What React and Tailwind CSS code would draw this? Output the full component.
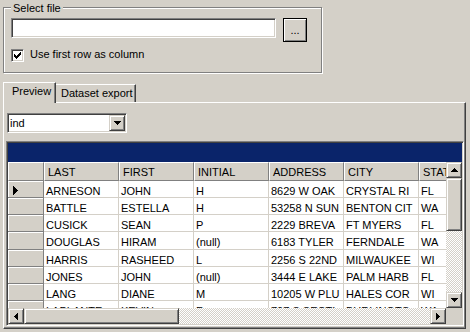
import React from "react";

const raised =
  "border border-t-[#d4d0c8] border-l-[#d4d0c8] border-b-[#404040] border-r-[#404040] shadow-[inset_1px_1px_0_#fff,inset_-1px_-1px_0_#808080]";
const sunken =
  "border border-t-[#808080] border-l-[#808080] border-b-white border-r-white shadow-[inset_1px_1px_0_#404040,inset_-1px_-1px_0_#d4d0c8]";
const checker =
  "bg-[image:repeating-conic-gradient(#ffffff_0_25%,#d4d0c8_0_50%)] bg-[length:2px_2px]";

const columns = ["LAST", "FIRST", "INITIAL", "ADDRESS", "CITY", "STATE"];

const rows = [
  ["ARNESON", "JOHN", "H", "8629 W OAK", "CRYSTAL RI", "FL"],
  ["BATTLE", "ESTELLA", "H", "53258 N SUN", "BENTON CIT", "WA"],
  ["CUSICK", "SEAN", "P", "2229 BREVA", "FT MYERS", "FL"],
  ["DOUGLAS", "HIRAM", "(null)", "6183 TYLER", "FERNDALE", "WA"],
  ["HARRIS", "RASHEED", "L", "2256 S 22ND", "MILWAUKEE", "WI"],
  ["JONES", "JOHN", "(null)", "3444 E LAKE", "PALM HARB", "FL"],
  ["LANG", "DIANE", "M", "10205 W PLU", "HALES COR", "WI"],
  ["LAPLANTE", "KEVIN", "F", "707 S SECTI", "BURLINGTO", "WA"],
];

// pixel triangle, n = number of steps (7,5,3,1 for n=4)
function Tri({ dir, n = 4 }) {
  const long = n * 2 - 1;
  const horiz = dir === "left" || dir === "right";
  const w = horiz ? n : long;
  const h = horiz ? long : n;
  const rects = [];
  for (let i = 0; i < n; i++) {
    const len = long - i * 2;
    if (dir === "down") rects.push([i, i, len, 1]);
    if (dir === "up") rects.push([i, n - 1 - i, len, 1]);
    if (dir === "right") rects.push([i, i, 1, len]);
    if (dir === "left") rects.push([n - 1 - i, i, 1, len]);
  }
  return (
    <svg width={w} height={h} viewBox={`0 0 ${w} ${h}`} shapeRendering="crispEdges">
      {rects.map(([x, y, rw, rh], k) => (
        <rect key={k} x={x} y={y} width={rw} height={rh} fill="#000" />
      ))}
    </svg>
  );
}

function ScrollBtn({ dir, className = "" }) {
  return (
    <div className={`${raised} bg-[#d4d0c8] flex items-center justify-center shrink-0 ${className}`}>
      <Tri dir={dir} />
    </div>
  );
}

export default function App() {
  return (
    <div className="w-[470px] h-[332px] overflow-hidden bg-[#d4d0c8] font-['Liberation_Sans',Arial,sans-serif] text-[11px] leading-[13px] text-black pt-[7px] pl-[3px]">
      {/* Select file group */}
      <div className="relative w-[319px] h-[66px] border border-[#808080] shadow-[inset_1px_1px_0_#fff,1px_1px_0_#fff] pl-[7px] pt-[10px]">
        <div className="absolute left-[7px] top-[-6px] px-[2px] bg-[#d4d0c8]">Select file</div>
        <div className="flex items-start gap-[7px]">
          <div className={`w-[265px] h-[20px] bg-white ${sunken}`} />
          <div className="w-[24px] h-[24px] border border-black shadow-[inset_1px_1px_0_#fff,inset_-1px_-1px_0_#808080] flex items-center justify-center">
            ...
          </div>
        </div>
        <div className="mt-[6px] flex items-center gap-[6px]">
          <div className={`w-[13px] h-[13px] bg-white p-[1px] ${sunken}`}>
            <svg width="7" height="7" viewBox="0 0 7 7" className="ml-[1px] mt-[1px]" shapeRendering="crispEdges">
              <rect x="6" y="0" width="1" height="3" />
              <rect x="5" y="1" width="1" height="3" />
              <rect x="4" y="2" width="1" height="3" />
              <rect x="3" y="3" width="1" height="3" />
              <rect x="2" y="4" width="1" height="3" />
              <rect x="1" y="3" width="1" height="3" />
              <rect x="0" y="2" width="1" height="3" />
            </svg>
          </div>
          <span className="pb-[2px]">Use first row as column</span>
        </div>
      </div>

      {/* Tabs */}
      <div className="mt-[9px] h-[21px] flex items-end relative z-10">
        <div className="w-[53px] h-[21px] bg-[#d4d0c8] border-t border-l border-t-white border-l-white border-r border-r-[#404040] shadow-[inset_-1px_0_0_#808080] pl-[8px] pt-[2px]">
          Preview
        </div>
        <div className="w-[80px] h-[18px] mb-[1px] border-t border-t-white border-r border-r-[#404040] shadow-[inset_-1px_0_0_#808080] pl-[5px] pt-[2px] whitespace-nowrap">
          Dataset export
        </div>
      </div>

      {/* Tab panel */}
      <div className="-mt-[1px] w-[463px] border border-t-white border-l-white border-r-[#404040] border-b-[#404040] shadow-[inset_-1px_-1px_0_#808080] pl-[2px] pr-[1px] pt-[10px] pb-[2px]">
        <div className={`ml-[1px] w-[120px] h-[20px] bg-white p-[1px] flex ${sunken}`}>
          <div className="flex-1 pl-[1px] flex items-center">ind</div>
          <ScrollBtn dir="down" className="w-[16px] h-full" />
        </div>

        {/* Grid */}
        <div className={`mt-[8px] w-[458px] h-[185px] p-[1px] bg-[#d4d0c8] flex flex-col ${sunken}`}>
          <div className="h-[19px] bg-[#0a246a] shrink-0" />
          <div className="flex h-[162px]">
            <div className="w-[438px] flex flex-col">
              {/* header */}
              <div className="h-[19px] flex overflow-hidden shrink-0">
                <div className="w-[36px] shrink-0 border-t border-l border-t-white border-l-white border-r border-b border-r-[#808080] border-b-[#808080]" />
                {columns.map((c) => (
                  <div
                    key={c}
                    className="w-[75px] shrink-0 border-t border-l border-t-white border-l-white border-r border-b border-r-[#808080] border-b-[#808080] pl-[3px] pt-[3px] leading-[12px] whitespace-nowrap overflow-hidden"
                  >
                    {c}
                  </div>
                ))}
              </div>
              {/* rows */}
              <div className="h-[127px] overflow-hidden shrink-0">
                {rows.map((r, i) => (
                  <div key={i} className={`flex ${i === 3 ? "h-[18px]" : "h-[17px]"}`}>
                    <div className="w-[36px] shrink-0 bg-[#d4d0c8] border-r border-b border-r-[#808080] border-b-[#808080] shadow-[inset_1px_1px_0_#fff] pl-[5px] pt-[5px]">
                      {i === 0 && <Tri dir="right" n={5} />}
                    </div>
                    {r.map((v, j) => (
                      <div
                        key={j}
                        className="w-[75px] shrink-0 bg-white border-r border-b border-[#d4d0c8] pl-[2px] pt-[4px] leading-[12px] whitespace-nowrap overflow-hidden"
                      >
                        {v}
                      </div>
                    ))}
                  </div>
                ))}
              </div>
              {/* horizontal scrollbar */}
              <div className="h-[16px] flex shrink-0">
                <ScrollBtn dir="left" className="w-[16px] h-full" />
                <div className={`w-[155px] h-full bg-[#d4d0c8] ${raised}`} />
                <div className={`flex-1 h-full ${checker}`} />
                <ScrollBtn dir="right" className="w-[16px] h-full" />
              </div>
            </div>
            {/* vertical scrollbar */}
            <div className="w-[16px] flex flex-col">
              <ScrollBtn dir="up" className="h-[16px] w-full" />
              <div className={`h-[53px] w-full bg-[#d4d0c8] shrink-0 ${raised}`} />
              <div className={`flex-1 w-full ${checker}`} />
              <ScrollBtn dir="down" className="h-[16px] w-full" />
              <div className="h-[16px] w-full bg-[#d4d0c8] shrink-0" />
            </div>
          </div>
        </div>
      </div>
    </div>
  );
}
